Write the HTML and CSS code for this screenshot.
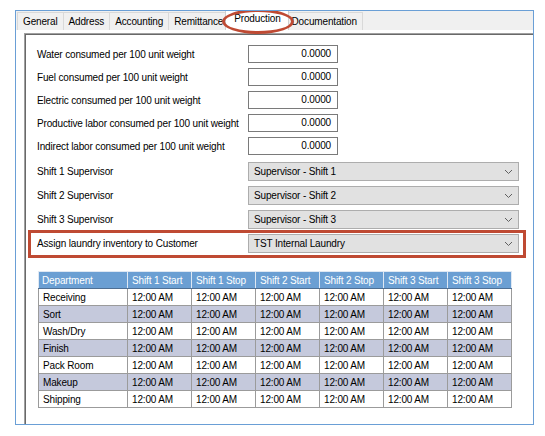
FILE: index.html
```html
<!DOCTYPE html>
<html lang="en">
<head>
    <meta charset="UTF-8">
    <title>Production</title>
    <link rel="stylesheet" href="styles.css">
</head>
<body>
    <div class="frame">
        <div class="tabs">
            <span class="tab">General</span>
            <span class="tab">Address</span>
            <span class="tab">Accounting</span>
            <span class="tab">Remittance</span>
            <span class="tab active">Production<span class="ring"></span></span>
            <span class="tab">Documentation</span>
        </div>

        <div class="panel">
            <div class="fields">
                <div class="row">
                    <label>Water consumed per 100 unit weight</label>
                    <div class="num">0.0000</div>
                </div>
                <div class="row">
                    <label>Fuel consumed per 100 unit weight</label>
                    <div class="num">0.0000</div>
                </div>
                <div class="row">
                    <label>Electric consumed per 100 unit weight</label>
                    <div class="num">0.0000</div>
                </div>
                <div class="row">
                    <label>Productive labor consumed per 100 unit weight</label>
                    <div class="num">0.0000</div>
                </div>
                <div class="row">
                    <label>Indirect labor consumed per 100 unit weight</label>
                    <div class="num">0.0000</div>
                </div>

                <div class="row combo-row first">
                    <label>Shift 1 Supervisor</label>
                    <div class="combo">Supervisor - Shift 1<svg class="chev" width="9" height="6" viewBox="0 0 9 6"><path d="M1 1 L4.5 4.5 L8 1" fill="none" stroke="#606060" stroke-width="1"/></svg></div>
                </div>
                <div class="row combo-row">
                    <label>Shift 2 Supervisor</label>
                    <div class="combo">Supervisor - Shift 2<svg class="chev" width="9" height="6" viewBox="0 0 9 6"><path d="M1 1 L4.5 4.5 L8 1" fill="none" stroke="#606060" stroke-width="1"/></svg></div>
                </div>
                <div class="row combo-row">
                    <label>Shift 3 Supervisor</label>
                    <div class="combo">Supervisor - Shift 3<svg class="chev" width="9" height="6" viewBox="0 0 9 6"><path d="M1 1 L4.5 4.5 L8 1" fill="none" stroke="#606060" stroke-width="1"/></svg></div>
                </div>
                <div class="row combo-row highlight">
                    <label>Assign laundry inventory to Customer</label>
                    <div class="combo">TST Internal Laundry<svg class="chev" width="9" height="6" viewBox="0 0 9 6"><path d="M1 1 L4.5 4.5 L8 1" fill="none" stroke="#606060" stroke-width="1"/></svg></div>
                </div>
            </div>

            <table class="shifts">
                <thead>
                    <tr>
                        <th class="dept">Department</th>
                        <th>Shift 1 Start</th>
                        <th>Shift 1 Stop</th>
                        <th>Shift 2 Start</th>
                        <th>Shift 2 Stop</th>
                        <th>Shift 3 Start</th>
                        <th>Shift 3 Stop</th>
                    </tr>
                </thead>
                <tbody id="rows"></tbody>
            </table>
        </div>
    </div>

    <script>
        // departments all start at midnight
        const departments = ["Receiving", "Sort", "Wash/Dry", "Finish", "Pack Room", "Makeup", "Shipping"];
        const body = document.getElementById('rows');

        departments.forEach((name) => {
            const tr = document.createElement('tr');
            let html = '<td>' + name + '</td>';
            for (let i = 0; i < 6; i++) {
                html += '<td>12:00 AM</td>';
            }
            tr.innerHTML = html;
            body.appendChild(tr);
        });
    </script>
</body>
</html>
```

FILE: styles.css
```css
/* window chrome */
body {
    margin: 0;
    background: #ffffff;
    font-family: "Liberation Sans", Arial, sans-serif;
    font-size: 10px;
    letter-spacing: -0.15px;
    color: #000000;
}

.frame {
    margin: 10px 0 0 15px;
    width: 517px;
    height: 413px;
    border: 1px solid #6a9fd6;
    overflow: hidden;
    background: #ffffff;
}

/* tab strip */
.tabs {
    display: flex;
    align-items: flex-end;
    height: 19px;
    padding-left: 1px;
    background: #f0f0f0;
}

.tab {
    position: relative;
    height: 17px;
    line-height: 17px;
    padding: 0 5px;
    border: 1px solid #d9d9d9;
    border-bottom: none;
    margin-right: -1px;
    background: #f0f0f0;
    white-space: nowrap;
}

.tab.active {
    height: 19px;
    line-height: 16px;
    padding: 0 7px 0 8px;
    margin: 0 -3px;
    background: #ffffff;
    border-color: #d0d0d0;
    z-index: 1;
}

/* annotation around the active tab */
.ring {
    position: absolute;
    left: -4px;
    top: -2px;
    width: 66px;
    height: 19px;
    border: 3px solid #bf4a33;
    border-radius: 50%;
}

.panel {
    margin: 3px 0 0 8px;
    height: 400px;
    border-top: 1px solid #a0a0a0;
    border-left: 1px solid #a0a0a0;
    box-shadow: inset 1px 1px 0 #696969;
    padding: 11px 0 0 12px;
}

/* form rows */
.fields {
    display: flex;
    flex-direction: column;
    gap: 5px;
}

.row {
    display: flex;
    align-items: center;
    height: 18px;
}

.row label {
    width: 211px;
    flex-shrink: 0;
    white-space: nowrap;
}

.num {
    width: 82px;
    height: 16px;
    line-height: 16px;
    padding-right: 6px;
    border: 1px solid #7a7a7a;
    text-align: right;
}

.combo-row {
    height: 19px;
}

.combo-row.first {
    margin-top: 2px;
}

.combo {
    position: relative;
    width: 264px;
    height: 17px;
    line-height: 17px;
    padding-left: 5px;
    background: #e1e1e1;
    border: 1px solid #adadad;
}

.chev {
    position: absolute;
    right: 5px;
    top: 6px;
}

.highlight {
    margin: -4px 0 0 -9px;
    padding: 1px 2px 2px 6px;
    border: 3px solid #bf4a33;
    width: 484px;
}

/* shift grid */
.shifts {
    margin: 13px 0 0 1px;
    border-collapse: collapse;
    border: 1px solid #8c8c8c;
}

.shifts th,
.shifts td {
    height: 16px;
    padding: 0 0 0 4px;
    text-align: left;
    font-weight: normal;
    white-space: nowrap;
    border: 1px solid #9b9b9b;
}

.shifts th {
    width: 59px;
    background: #6b9fd3;
    color: #ffffff;
    border-color: #dfe8f3;
    border-bottom: 1px solid #4f6f93;
}

.shifts th.dept {
    width: 85px;
    padding-left: 3px;
}

.shifts td:first-child {
    padding-left: 4px;
}

.shifts tbody tr:nth-child(even) td {
    background: #c5c9dc;
}
```
